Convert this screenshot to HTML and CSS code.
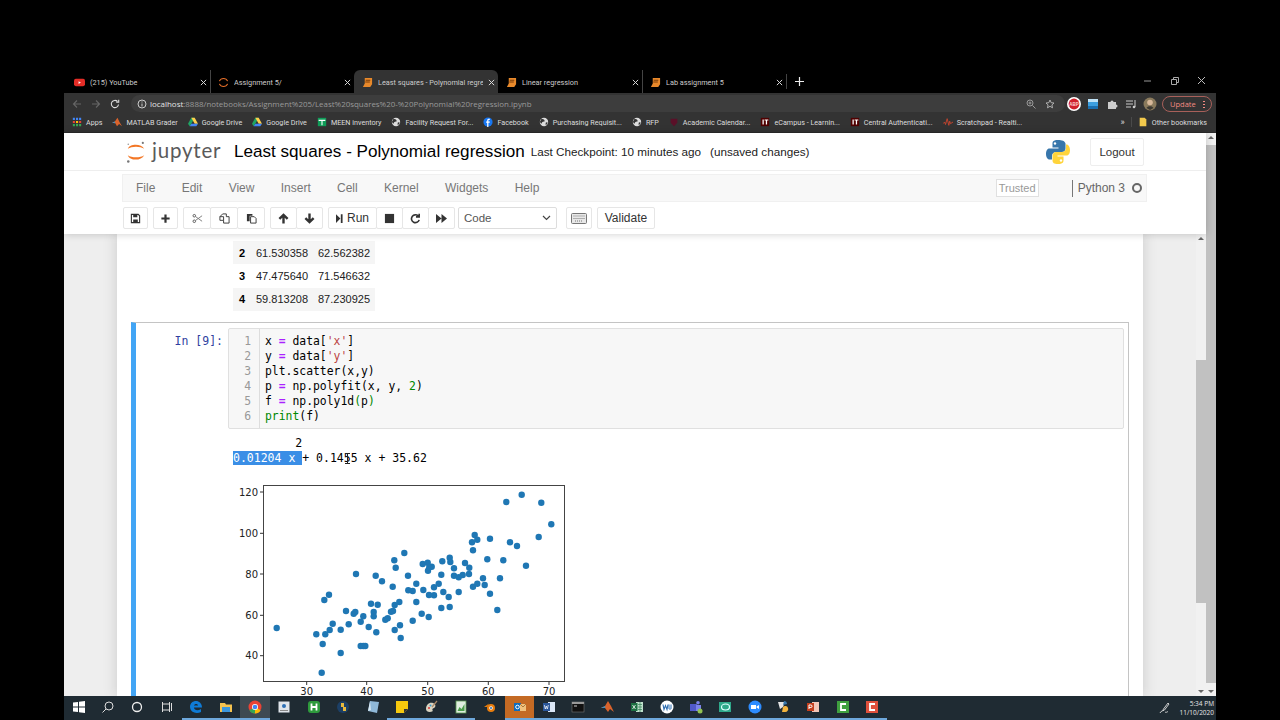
FILE: index.html
```html
<!DOCTYPE html>
<html lang="en">
<head>
    <meta charset="UTF-8">
    <title>Least squares - Polynomial regression</title>
    <link rel="stylesheet" href="styles.css">
</head>
<body>
<svg class="defs" width="0" height="0">
    <symbol id="book" viewBox="0 0 12 12"><path d="M3 1h8v7l-2 3H1l2-4z" fill="#e8892b"/><path d="M4 3h5v1H4zM3.500 5h5v1h-5z" fill="#7a3d08"/></symbol>
    <symbol id="globe" viewBox="0 0 12 12"><circle cx="6" cy="6" r="5" fill="#dcdcdc"/><path d="M3 2l3 1 1 2-3 1-1 2-2-2zM8 7l2-1 0 2-2 2z" fill="#333"/></symbol>
    <symbol id="drive" viewBox="0 0 12 12"><path d="M4 1h4l-4 7-2 3-2-3z" fill="#1fa463"/><path d="M4 1h4l4 7H8z" fill="#ffd04b"/><path d="M2 11l2-3h8l-2 3z" fill="#4285f4"/></symbol>
    <symbol id="it" viewBox="0 0 12 12"><rect x="1" y="1" width="10" height="10" fill="#500000"/><path d="M3 3h1.500v6H3zM5.500 3H10v1.300H8.500V9H7V4.300H5.500z" fill="#fff"/></symbol>
    <symbol id="close" viewBox="0 0 8 8"><path d="M1 1l6 6M7 1L1 7" stroke="#ddd" stroke-width="1.100"/></symbol>
</svg>

<div class="window">
    <!-- Chrome tabs -->
    <div class="tabbar">
        <div class="tab">
            <svg class="tab-icon" viewBox="0 0 12 12"><rect x="0" y="2" width="12" height="8" rx="2" fill="#e52d27"/><path d="M5 4.500v3l2.500-1.500z" fill="#fff"/></svg>
            <span class="tab-title">(215) YouTube</span>
            <svg class="tab-close"><use href="#close"/></svg>
        </div>
        <div class="tab tab-sep">
            <svg class="tab-icon" viewBox="0 0 12 12"><path d="M1.500 4.500a5 5 0 0 1 9 0M1.500 7.500a5 5 0 0 0 9 0" fill="none" stroke="#e8702a" stroke-width="1.200"/></svg>
            <span class="tab-title">Assignment 5/</span>
            <svg class="tab-close"><use href="#close"/></svg>
        </div>
        <div class="tab tab-active">
            <svg class="tab-icon"><use href="#book"/></svg>
            <span class="tab-title">Least squares - Polynomial regre</span>
            <svg class="tab-close"><use href="#close"/></svg>
        </div>
        <div class="tab">
            <svg class="tab-icon"><use href="#book"/></svg>
            <span class="tab-title">Linear regression</span>
            <svg class="tab-close"><use href="#close"/></svg>
        </div>
        <div class="tab tab-sep">
            <svg class="tab-icon"><use href="#book"/></svg>
            <span class="tab-title">Lab assignment 5</span>
            <svg class="tab-close"><use href="#close"/></svg>
        </div>
        <div class="new-tab">
            <svg width="9" height="9" viewBox="0 0 9 9"><path d="M4.500 0v9M0 4.500h9" stroke="#eee" stroke-width="1.200"/></svg>
        </div>
        <div class="win-controls">
            <svg width="10" height="10" viewBox="0 0 10 10"><path d="M1 5h7" stroke="#999"/></svg>
            <svg width="10" height="10" viewBox="0 0 10 10"><path d="M1.500 3.500h5v5h-5zM3.500 3.500v-2h5v5h-2" fill="none" stroke="#aaa"/></svg>
            <svg width="10" height="10" viewBox="0 0 10 10"><path d="M1 1l7 7M8 1L1 8" stroke="#bbb"/></svg>
        </div>
    </div>

    <!-- Address bar -->
    <div class="toolbar">
        <svg class="nav-icon" viewBox="0 0 10 10"><path d="M9 5H1.500M5 1.500L1.500 5 5 8.500" fill="none" stroke="#666" stroke-width="1.100"/></svg>
        <svg class="nav-icon" viewBox="0 0 10 10"><path d="M1 5h7.500M5 1.500L8.500 5 5 8.500" fill="none" stroke="#666" stroke-width="1.100"/></svg>
        <svg class="nav-icon" viewBox="0 0 10 10"><path d="M8.500 5.500a3.600 3.600 0 1 1-1-3M8.700 0.800v2.500H6.200" fill="none" stroke="#ddd" stroke-width="1.100"/></svg>
        <div class="omnibox">
            <svg class="omni-info" viewBox="0 0 10 10"><circle cx="5" cy="5" r="4" fill="none" stroke="#ccc"/><path d="M5 4.500V7.500M5 2.500v1" stroke="#ccc"/></svg>
            <span class="url"><b>localhost</b>:8888/notebooks/Assignment%205/Least%20squares%20-%20Polynomial%20regression.ipynb</span>
            <svg class="omni-end" viewBox="0 0 10 10"><circle cx="4" cy="4" r="3" fill="none" stroke="#999"/><path d="M6.500 6.500L9.500 9.500M2.500 4h3M4 2.500v3" stroke="#999"/></svg>
            <svg class="omni-end" viewBox="0 0 10 10"><path d="M5 1l1.200 2.700 2.800.3-2.100 1.900.6 2.900L5 7.300 2.500 8.800l.6-2.900L1 4l2.800-.3z" fill="none" stroke="#bbb" stroke-width=".9"/></svg>
        </div>
        <div class="ext-icons">
            <svg class="ext" viewBox="0 0 14 14"><circle cx="7" cy="7" r="7" fill="#fff"/><circle cx="7" cy="7" r="5.400" fill="#d0202a"/><text class="abp" x="7" y="8.600">ABP</text></svg>
            <svg class="ext" viewBox="0 0 14 14"><rect x="2" y="2" width="10" height="10" fill="#3b9fe0"/><rect x="2" y="2" width="10" height="3" fill="#bfe3f7"/><rect x="2" y="9" width="10" height="3" fill="#1a6fb0"/></svg>
            <svg class="ext" viewBox="0 0 14 14"><path d="M3 5h2.500a1.500 1.500 0 0 1 3 0H11v2.500a1.500 1.500 0 0 1 0 3V12H3z" fill="#ccc"/></svg>
            <svg class="ext" viewBox="0 0 14 14"><path d="M2 4h7M2 7h7M2 10h5" stroke="#ccc" stroke-width="1.100"/><path d="M11 3v7" stroke="#ccc"/><circle cx="10" cy="10" r="1.300" fill="#ccc"/></svg>
            <svg class="ext" viewBox="0 0 14 14"><circle cx="7" cy="7" r="6.500" fill="#8a7a5c"/><circle cx="7" cy="5.500" r="2.800" fill="#d8b99a"/><path d="M3.500 11c1-2.500 6-2.500 7 0l-3.500 2z" fill="#3d3a33"/></svg>
            <div class="update-btn">Update<span class="update-dots"></span></div>
        </div>
    </div>

    <!-- Bookmarks bar -->
    <div class="bookmarks">
        <div class="bm bm-apps">
            <svg class="bm-icon" viewBox="0 0 12 12"><path d="M1 1h2.500v2.500H1zM4.800 1h2.500v2.500H4.800zM8.500 1H11v2.500H8.500z" fill="#4285f4"/><path d="M1 4.800h2.500v2.500H1zM8.500 4.800H11v2.500H8.500z" fill="#ea4335"/><path d="M4.800 4.800h2.500v2.500H4.800z" fill="#fbbc05"/><path d="M1 8.500h2.500V11H1zM4.800 8.500h2.500V11H4.800zM8.500 8.500H11V11H8.500z" fill="#34a853"/></svg>Apps
        </div>
        <div class="bm">
            <svg class="bm-icon" viewBox="0 0 12 12"><path d="M0 7l3.500-1.500L6.500 1 9 6l3 5-3.500-2.500L6 11 4 7.500z" fill="#d9622b"/><path d="M0 7l3.500-1.500L4 7.500z" fill="#3f8fc0"/></svg>MATLAB Grader
        </div>
        <div class="bm"><svg class="bm-icon"><use href="#drive"/></svg>Google Drive</div>
        <div class="bm"><svg class="bm-icon"><use href="#drive"/></svg>Google Drive</div>
        <div class="bm">
            <svg class="bm-icon" viewBox="0 0 12 12"><rect x="1" y="1" width="10" height="10" fill="#0f9d58"/><path d="M2 4h8M6 4v6" stroke="#fff" stroke-width="1.300"/></svg>MEEN inventory
        </div>
        <div class="bm"><svg class="bm-icon"><use href="#globe"/></svg>Facility Request For...</div>
        <div class="bm">
            <svg class="bm-icon" viewBox="0 0 12 12"><circle cx="6" cy="6" r="5.500" fill="#1877f2"/><path d="M6.500 12V7H8l.3-1.700H6.500V4.300c0-.6.300-.9.900-.9h1V2h-1.300C5.800 2 5 2.800 5 4.100v1.200H3.700V7H5v5z" fill="#fff"/></svg>Facebook
        </div>
        <div class="bm"><svg class="bm-icon"><use href="#globe"/></svg>Purchasing Requisit...</div>
        <div class="bm"><svg class="bm-icon"><use href="#globe"/></svg>RFP</div>
        <div class="bm">
            <svg class="bm-icon" viewBox="0 0 12 12"><path d="M2 2h8v5l-4 4-4-4z" fill="#5a1028"/></svg>Academic Calendar...
        </div>
        <div class="bm"><svg class="bm-icon"><use href="#it"/></svg>eCampus - Learnin...</div>
        <div class="bm"><svg class="bm-icon"><use href="#it"/></svg>Central Authenticati...</div>
        <div class="bm">
            <svg class="bm-icon" viewBox="0 0 12 12"><path d="M0 8l2-2 1 3 2-7 2 8 1-5 1 3 3-2" fill="none" stroke="#c8452f" stroke-width="1.100"/></svg>Scratchpad - Realti...
        </div>
        <div class="bm-more">&raquo;</div>
        <div class="bm bm-other">
            <svg class="bm-icon" viewBox="0 0 12 12"><path d="M2 1h6l2 2v8H2z" fill="#f2c94c"/></svg>Other bookmarks
        </div>
    </div>

    <!-- Browser page -->
    <div class="page">
        <div class="page-main">
            <div class="nb-header">
                <div class="nb-title-row">
                    <svg class="jp-logo" viewBox="0 0 22 26">
                        <path d="M2 9.500C4 3.500 17 3.500 20 9.500 16 6.500 6 6.500 2 9.500z" fill="#f37726"/>
                        <path d="M2 16.500C4 23 17 23 20 16.500 16 19.500 6 19.500 2 16.500z" fill="#f37726"/>
                        <circle cx="18.500" cy="3" r="1.200" fill="#767677"/>
                        <circle cx="2.500" cy="23.500" r="1.400" fill="#767677"/>
                        <circle cx="2.500" cy="4.500" r=".9" fill="#989798"/>
                    </svg>
                    <span class="jp-word">jupyter</span>
                    <span class="nb-name">Least squares - Polynomial regression</span>
                    <span class="nb-check">Last Checkpoint: 10 minutes ago</span>
                    <span class="nb-unsaved">(unsaved changes)</span>
                    <svg class="py-logo" viewBox="0 0 26 26">
                        <path d="M13 1C7 1 7.500 3.500 7.500 6v2.500H13.500v1H4.500C2 9.500 1 12 1 15s1.500 5.500 3.500 5.500h2.500v-3.500c0-2.500 2-4 4.500-4h5.500c2 0 3.500-1.500 3.500-3.500V4.500C20 2 17 1 13 1z" fill="#3776ab"/>
                        <path d="M13 25c6 0 5.500-2.500 5.500-5v-2.500H12.500v-1h9c2.500 0 3.500-2.500 3.500-5.500s-1.500-5.500-3.500-5.500H21v3.500c0 2.500-2 4-4.500 4H11c-2 0-3.500 1.500-3.500 3.500v4.500C7.500 24 9 25 13 25z" fill="#ffd43b"/>
                        <circle cx="10" cy="4.500" r="1.200" fill="#fff"/>
                        <circle cx="16" cy="21.500" r="1.200" fill="#fff"/>
                    </svg>
                    <div class="logout">Logout</div>
                </div>
                <div class="menubar">
                    <span class="menu-item">File</span>
                    <span class="menu-item">Edit</span>
                    <span class="menu-item">View</span>
                    <span class="menu-item">Insert</span>
                    <span class="menu-item">Cell</span>
                    <span class="menu-item">Kernel</span>
                    <span class="menu-item">Widgets</span>
                    <span class="menu-item">Help</span>
                    <span class="trusted">Trusted</span>
                    <span class="kernel-name">Python 3</span>
                    <span class="kernel-dot"></span>
                </div>
                <div class="nb-toolbar">
                    <div class="btn-group">
                        <div class="tb-btn"><svg class="tb-icon" viewBox="0 0 12 12"><path d="M1.500 1.500h7.500l1.500 1.500v7.500h-9z" fill="none" stroke="#333" stroke-width="1.200"/><path d="M3.500 1.500h4.500v3H3.500zM3.500 7h5v3.500h-5z" fill="#333"/></svg></div>
                    </div>
                    <div class="btn-group">
                        <div class="tb-btn"><svg class="tb-icon" viewBox="0 0 12 12"><path d="M6 1.500v9M1.500 6h9" stroke="#333" stroke-width="2.400"/></svg></div>
                    </div>
                    <div class="btn-group">
                        <div class="tb-btn"><svg class="tb-icon" viewBox="0 0 12 12"><circle cx="2.500" cy="3" r="1.400" fill="none" stroke="#555"/><circle cx="2.500" cy="9" r="1.400" fill="none" stroke="#555"/><path d="M3.700 3.800L11 9M3.700 8.200L11 3" stroke="#777"/></svg></div>
                        <div class="tb-btn"><svg class="tb-icon" viewBox="0 0 12 12"><path d="M4 1h4v3h3v7H5V8H1V4zM5 8V4H1" fill="none" stroke="#333"/></svg></div>
                        <div class="tb-btn"><svg class="tb-icon" viewBox="0 0 12 12"><path d="M1 1h6v2H4v6H1z" fill="#333"/><path d="M5 4h4l2 2v5H5z" fill="none" stroke="#333"/></svg></div>
                    </div>
                    <div class="btn-group">
                        <div class="tb-btn"><svg class="tb-icon" viewBox="0 0 12 12"><path d="M6 11.500V2.500M1.500 6.500L6 2l4.500 4.500" fill="none" stroke="#333" stroke-width="2.600"/></svg></div>
                        <div class="tb-btn"><svg class="tb-icon" viewBox="0 0 12 12"><path d="M6 .5v9M1.500 5.500L6 10l4.500-4.500" fill="none" stroke="#333" stroke-width="2.600"/></svg></div>
                    </div>
                    <div class="btn-group">
                        <div class="tb-btn tb-run"><svg class="tb-icon-sm" viewBox="0 0 8 10"><path d="M0 0l5 5-5 5zM5.500 0H7.500V10H5.500z" fill="#333"/></svg>Run</div>
                        <div class="tb-btn"><svg class="tb-icon" viewBox="0 0 12 12"><rect x="1" y="1" width="10" height="10" fill="#333"/></svg></div>
                        <div class="tb-btn"><svg class="tb-icon" viewBox="0 0 12 12"><path d="M10 7.500a4.300 4.300 0 1 1-1-4.200M10 .800v3.500H6.500" fill="none" stroke="#333" stroke-width="1.800"/></svg></div>
                        <div class="tb-btn"><svg class="tb-icon" viewBox="0 0 12 12"><path d="M0 1l6 5-6 5zM6 1l6 5-6 5z" fill="#333"/></svg></div>
                    </div>
                    <div class="cell-type">Code<svg width="9" height="6" viewBox="0 0 9 6"><path d="M1 1l3.500 3.500L8 1" fill="none" stroke="#444" stroke-width="1.200"/></svg></div>
                    <div class="tb-btn tb-keys"><svg width="16" height="11" viewBox="0 0 16 11"><rect x=".5" y=".5" width="15" height="10" rx="1" fill="#e8e8e8" stroke="#777"/><path d="M2.500 3h11M2.500 5.500h11M4 8h8" stroke="#777" stroke-dasharray="1 1"/></svg></div>
                    <div class="tb-btn tb-validate">Validate</div>
                </div>
            </div>

            <div class="nb-body">
                <div class="site">
                    <div class="nb-container">
                        <table class="frame">
                            <tr><th>2</th><td>61.530358</td><td>62.562382</td></tr>
                            <tr><th>3</th><td>47.475640</td><td>71.546632</td></tr>
                            <tr><th>4</th><td>59.813208</td><td>87.230925</td></tr>
                        </table>

                        <div class="cell">
                            <div class="input-row">
                                <div class="prompt">In&nbsp;[9]:</div>
                                <div class="input-area">
                                    <div class="gutter">1<br>2<br>3<br>4<br>5<br>6</div>
                                    <pre class="code">x <span class="op">=</span> data[<span class="str">'x'</span>]
y <span class="op">=</span> data[<span class="str">'y'</span>]
plt.scatter(x,y)
p <span class="op">=</span> np.polyfit(x, y, <span class="num">2</span>)
f <span class="op">=</span> np.poly1d<span class="num">(</span>p<span class="num">)</span>
<span class="num">print</span>(f)</pre>
                                </div>
                            </div>
                            <div class="output">
                                <pre class="stdout">         2
<span class="selected">0.01204 x </span>+ 0.1455 x + 35.62</pre>
                                <svg class="ibeam" width="7" height="11" viewBox="0 0 7 11"><path d="M1 .5h5M3.500.5v10M1 10.500h5" fill="none" stroke="#222"/></svg>
                                <svg class="plot" width="340" height="216" viewBox="0 0 340 216">
                                    <rect x="30.500" y="5.500" width="301" height="196" fill="#fff" stroke="#444"/>
                                    <path class="ticks" d="M27 12h3.500M27 53.300h3.500M27 94h3.500M27 135.300h3.500M27 175.700h3.500M73.700 201.500v3.500M133.700 201.500v3.500M194.700 201.500v3.500M255.300 201.500v3.500M316 201.500v3.500"/>
                                    <g class="tick-y">
                                        <text x="25" y="15.500">120</text>
                                        <text x="25" y="56.800">100</text>
                                        <text x="25" y="97.500">80</text>
                                        <text x="25" y="138.800">60</text>
                                        <text x="25" y="179.200">40</text>
                                    </g>
                                    <g class="tick-x">
                                        <text x="73.700" y="215">30</text>
                                        <text x="133.700" y="215">40</text>
                                        <text x="194.700" y="215">50</text>
                                        <text x="255.300" y="215">60</text>
                                        <text x="316" y="215">70</text>
                                    </g>
                                    <g class="dots">
                                        <circle cx="43.700" cy="148"/><circle cx="83.300" cy="154.300"/><circle cx="92.300" cy="154.300"/><circle cx="89.700" cy="164"/><circle cx="96.700" cy="150"/><circle cx="99.700" cy="143.700"/><circle cx="107.700" cy="149.700"/><circle cx="107.700" cy="173"/><circle cx="88.700" cy="192.700"/><circle cx="91.300" cy="120"/><circle cx="96" cy="114.700"/><circle cx="123" cy="94"/><circle cx="113" cy="131"/><circle cx="115.700" cy="144.300"/><circle cx="120.700" cy="133.700"/><circle cx="122.300" cy="132"/><circle cx="127.700" cy="141.700"/><circle cx="130.300" cy="136.300"/><circle cx="127.700" cy="166"/><circle cx="130.300" cy="166"/><circle cx="132.300" cy="166"/><circle cx="135.700" cy="147"/><circle cx="143.300" cy="152.300"/><circle cx="138" cy="123.700"/><circle cx="144.700" cy="124.700"/><circle cx="140.700" cy="132"/><circle cx="140.700" cy="136.300"/><circle cx="142.700" cy="95.700"/><circle cx="149" cy="101.300"/><circle cx="159.700" cy="106.700"/><circle cx="152.300" cy="139.700"/><circle cx="154.700" cy="138.300"/><circle cx="158" cy="131.700"/><circle cx="160" cy="131"/><circle cx="161.700" cy="125"/><circle cx="166.300" cy="122"/><circle cx="161.300" cy="80.300"/><circle cx="162.700" cy="87.700"/><circle cx="161.700" cy="150"/><circle cx="167" cy="145.300"/><circle cx="167.700" cy="158"/>
                                        <circle cx="171.300" cy="73"/><circle cx="175" cy="95.700"/><circle cx="175.300" cy="110.300"/><circle cx="179.700" cy="111"/><circle cx="183.300" cy="103.700"/><circle cx="183.300" cy="122"/><circle cx="179.700" cy="140.700"/><circle cx="188.700" cy="133.700"/><circle cx="195.700" cy="137"/><circle cx="190.300" cy="110"/><circle cx="196" cy="115"/><circle cx="201" cy="115.300"/><circle cx="201" cy="107.300"/><circle cx="205.700" cy="103.700"/><circle cx="210.300" cy="112"/><circle cx="215.700" cy="117"/><circle cx="208.300" cy="128"/><circle cx="216.700" cy="127"/><circle cx="225.700" cy="112"/><circle cx="240" cy="106.700"/><circle cx="244.300" cy="103.700"/><circle cx="251.700" cy="105"/><circle cx="250" cy="98.300"/><circle cx="257" cy="113.700"/><circle cx="264.300" cy="130"/><circle cx="267" cy="98.300"/><circle cx="189.700" cy="84"/><circle cx="194.700" cy="82.700"/><circle cx="198.700" cy="86.700"/><circle cx="195" cy="90.700"/><circle cx="196.300" cy="87.300"/><circle cx="208.300" cy="94.700"/><circle cx="209.300" cy="81.300"/><circle cx="216.700" cy="77.700"/><circle cx="217.300" cy="82"/><circle cx="221" cy="88.300"/><circle cx="221" cy="95.700"/><circle cx="225.700" cy="97.300"/><circle cx="229.700" cy="95"/><circle cx="232" cy="83"/><circle cx="236.300" cy="87.700"/><circle cx="236" cy="94"/><circle cx="240" cy="70.300"/><circle cx="239" cy="62.300"/><circle cx="241.700" cy="55"/><circle cx="244.300" cy="59.700"/><circle cx="254.300" cy="79.300"/><circle cx="257" cy="58.700"/><circle cx="270.300" cy="80.300"/><circle cx="277" cy="62.300"/><circle cx="284" cy="66"/><circle cx="293" cy="85.700"/><circle cx="305.700" cy="57"/><circle cx="273.300" cy="22"/><circle cx="288.700" cy="14.700"/><circle cx="308.300" cy="22.700"/><circle cx="318.300" cy="44.300"/>
                                    </g>
                                </svg>
                            </div>
                        </div>
                    </div>
                </div>
                <div class="scrollbar scrollbar-inner"><span class="arrow-up"></span><div class="thumb-inner"></div><span class="arrow-down"></span></div>
            </div>
        </div>
        <div class="scrollbar scrollbar-outer"><span class="arrow-up"></span><div class="thumb-outer"></div><span class="arrow-down"></span></div>
    </div>

    <!-- Windows taskbar -->
    <div class="taskbar">
        <div class="task"><svg viewBox="0 0 14 14"><path d="M1 2.500L6 2v4.500H1zM7 1.800L13 1v5.500H7zM1 7.500h5V12L1 11.500zM7 7.500h6V13l-6-.8z" fill="#fff"/></svg></div>
        <div class="task"><svg viewBox="0 0 14 14"><circle cx="8" cy="6" r="4" fill="none" stroke="#ddd"/><path d="M5 9l-3.500 3.500" stroke="#ddd"/></svg></div>
        <div class="task"><svg viewBox="0 0 14 14"><circle cx="7" cy="7" r="4.500" fill="none" stroke="#eee" stroke-width="1.300"/></svg></div>
        <div class="task"><svg viewBox="0 0 14 14"><path d="M2.500 2v10M9.500 2v10M2.500 4h7v6h-7zM11.500 3v8" fill="none" stroke="#ddd"/></svg></div>
        <div class="task open"><svg viewBox="0 0 14 14"><path d="M1 7c0-4 3-6 6-6s6 2.500 6 6.500H5c.2 3 4 3.500 7 1.500v3c-4 2-11 1-11-5.500zM5 5.500h4C9 3.500 5.500 3.500 5 5.500z" fill="#0f7bd6"/></svg></div>
        <div class="task open"><svg viewBox="0 0 14 14"><path d="M1 3h5l1 1.500h6V12H1z" fill="#f4c24f"/><rect x="3" y="7" width="8" height="5" fill="#3a96dd"/></svg></div>
        <div class="task open task-lit"><svg viewBox="0 0 14 14"><circle cx="7" cy="7" r="6.500" fill="#ea4335"/><path d="M7 7L1.400 10.200A6.500 6.500 0 0 0 7 13.500z" fill="#34a853"/><path d="M7 7l5.600 3.200A6.500 6.500 0 0 1 7 13.500z" fill="#fbbc05"/><circle cx="7" cy="7" r="3" fill="#fff"/><circle cx="7" cy="7" r="2.300" fill="#4285f4"/></svg></div>
        <div class="task"><svg viewBox="0 0 14 14"><rect x="1.500" y="1.500" width="11" height="11" fill="#dfe4ea"/><circle cx="7" cy="6" r="2" fill="#2d6fb5"/><rect x="3" y="10" width="8" height="1" fill="#888"/></svg></div>
        <div class="task"><svg viewBox="0 0 14 14"><rect x="1" y="1" width="12" height="12" rx="3" fill="#2e9a3c"/><path d="M4.500 3.500v7M9.500 3.500v7M4.500 7h5" stroke="#fff" stroke-width="1.800"/></svg></div>
        <div class="task"><svg viewBox="0 0 14 14"><circle cx="7" cy="7" r="6" fill="#1c3f66"/><path d="M5 3h3v4H5zM7 7h3v4H7z" fill="#e8b93c"/></svg></div>
        <div class="task"><svg viewBox="0 0 14 14"><path d="M4 1l9 1-2 11-9-2z" fill="#8fb8d8"/><path d="M4 1L2 11l3-1z" fill="#d5e6f2"/></svg></div>
        <div class="task open"><svg viewBox="0 0 14 14"><path d="M1 1h12v8l-4 4H1z" fill="#f6c90e"/><path d="M13 9H9v4z" fill="#333"/></svg></div>
        <div class="task open"><svg viewBox="0 0 14 14"><path d="M2 9c0-4 3-7 7-6 3 1 3 4 1 5-2 .5-2 2-1 3-3 2-7 1-7-2z" fill="#d8d3c0"/><circle cx="5" cy="8" r="1" fill="#d33"/><circle cx="6.500" cy="5.500" r="1" fill="#39c"/><path d="M13 1L8 7" stroke="#a86" stroke-width="1.200"/></svg></div>
        <div class="task open"><svg viewBox="0 0 14 14"><rect x="2" y="1" width="10" height="12" fill="#dfeee0" stroke="#5a9a50" stroke-width=".8"/><path d="M3.500 11l2-4 2 2 3-5v7z" fill="#4a9e4a"/></svg></div>
        <div class="task"><svg viewBox="0 0 14 14"><circle cx="8" cy="8" r="4" fill="#e87d0d"/><circle cx="8" cy="8" r="1.800" fill="#fff"/><circle cx="8" cy="8" r="1" fill="#2d6fb5"/><path d="M1 7l5-3.500L4 7z" fill="#e87d0d"/></svg></div>
        <div class="task open task-orange"><svg viewBox="0 0 14 14"><rect x="1" y="3" width="7" height="8" fill="#0f6cbd"/><circle cx="4.500" cy="7" r="1.800" fill="none" stroke="#fff"/><rect x="7" y="4" width="6" height="7" fill="#f1c27d"/><path d="M7 4l3 3 3-3" fill="none" stroke="#8a5a20" stroke-width=".7"/></svg></div>
        <div class="task open"><svg viewBox="0 0 14 14"><rect x="6" y="2" width="7" height="10" fill="#dbe7f6"/><rect x="1" y="3" width="7" height="8" fill="#2b579a"/><path d="M2.300 5l1 4 1-3 1 3 1-4" fill="none" stroke="#fff" stroke-width=".7"/></svg></div>
        <div class="task open"><svg viewBox="0 0 14 14"><rect x="1" y="2" width="12" height="10" fill="#111" stroke="#777" stroke-width=".6"/><rect x="1" y="2" width="12" height="2" fill="#999"/><path d="M3 6h3" stroke="#ccc"/></svg></div>
        <div class="task open"><svg viewBox="0 0 14 14"><path d="M0 8l4-2L7 1l3 5 3 6-4-3-2 3-3-4z" fill="#d9622b"/><path d="M0 8l4-2 .5 2z" fill="#3f8fc0"/></svg></div>
        <div class="task open"><svg viewBox="0 0 14 14"><rect x="6" y="2" width="7" height="10" fill="#bfe0cc"/><path d="M8 4.500h4M8 7h4M8 9.500h4M10 2v10" stroke="#1d6f42" stroke-width=".6"/><rect x="1" y="3" width="6.500" height="8" fill="#1d6f42"/><path d="M2.500 5l3 4M5.500 5l-3 4" stroke="#fff" stroke-width=".8"/></svg></div>
        <div class="task open"><svg viewBox="0 0 14 14"><circle cx="7" cy="7" r="6.500" fill="#fff"/><path d="M3 4.500l1 5 1.500-4 1.500 4 1-5" fill="none" stroke="#2b6cb0" stroke-width="1.100"/><path d="M9 4.500v4c0 1 2 1 2 0v-4" fill="none" stroke="#2b6cb0"/></svg></div>
        <div class="task open"><svg viewBox="0 0 14 14"><rect x="1" y="4" width="7" height="7" fill="#5059c9"/><rect x="7" y="5" width="5" height="6" fill="#7b83eb"/><circle cx="9" cy="2.800" r="1.800" fill="#7b83eb"/><circle cx="11" cy="11" r="2.500" fill="#92c353"/></svg></div>
        <div class="task open"><svg viewBox="0 0 14 14"><rect x="1" y="2" width="12" height="10" fill="#2ea88a"/><ellipse cx="7.500" cy="7" rx="4" ry="3" fill="none" stroke="#dff" stroke-width="1.200"/></svg></div>
        <div class="task open"><svg viewBox="0 0 14 14"><circle cx="7" cy="7" r="6.500" fill="#2d8cff"/><path d="M3 5h5v4H3zM8.500 6.500L11 5v4L8.500 7.500z" fill="#fff"/></svg></div>
        <div class="task open"><svg viewBox="0 0 14 14"><path d="M1 2h7l-2 5-3 2z" fill="#e4e4e4"/><path d="M6 7a3 3 0 1 1 2 5H5z" fill="#f3b33d"/><path d="M7 1c2 0 3 1 3 3L6 5z" fill="#3776ab"/></svg></div>
        <div class="task open"><svg viewBox="0 0 14 14"><rect x="6" y="2" width="7" height="10" fill="#f4c7b8"/><rect x="1" y="3" width="7" height="8" fill="#c43e1c"/><path d="M3 9V5h1.800a1.200 1.200 0 0 1 0 2.500H3" fill="none" stroke="#fff"/></svg></div>
        <div class="task open"><svg viewBox="0 0 14 14"><rect x="1" y="1" width="12" height="12" fill="#3fa03f"/><path d="M10 4H5v6h5" fill="none" stroke="#fff" stroke-width="1.800"/></svg></div>
        <div class="task open"><svg viewBox="0 0 14 14"><rect x="1" y="1" width="12" height="12" fill="#e0503c"/><path d="M10 4H5v6h5" fill="none" stroke="#fff" stroke-width="1.800"/></svg></div>
        <div class="tray">
            <svg width="12" height="12" viewBox="0 0 12 12"><path d="M9 1L4.500 7 3.500 9l2-1L10 2zM3 9c-1 .3-1.500 1-2 2M6 10c1 .8 2 0 3-.5" fill="none" stroke="#ddd" stroke-width=".9"/></svg>
            <div class="clock"><span>5:34 PM</span><span>11/10/2020</span></div>
        </div>
    </div>
</div>
</body>
</html>
```

FILE: styles.css
```css
* {
    box-sizing: border-box;
}

html, body {
    margin: 0;
    height: 720px;
    overflow: hidden;
    background: #000;
    font-family: "Liberation Sans", Arial, sans-serif;
}

.defs {
    display: block;
    height: 0;
}

.window {
    width: 1152px;
    height: 720px;
    margin-left: 64px;
    padding-top: 70px;
    display: flex;
    flex-direction: column;
}

/* tabs */
.tabbar {
    height: 23px;
    display: flex;
    align-items: stretch;
    padding-left: 2px;
    background: #000;
    flex: none;
}

.tab {
    width: 144px;
    padding: 1px 3px 0 8px;
    display: flex;
    align-items: center;
    gap: 5px;
    color: #ccc;
    font: 7.300px Roboto, sans-serif;
    white-space: nowrap;
}

.tab-sep {
    border-left: 1px solid #444;
    padding-left: 7px;
}

.tab-active {
    background: #333;
    border-radius: 6px 6px 0 0;
}

.tab-icon {
    width: 11px;
    height: 11px;
    flex: none;
}

.tab-title {
    flex: 1;
    overflow: hidden;
}

.tab-close {
    width: 7px;
    height: 7px;
    flex: none;
}

.new-tab {
    width: 26px;
    border-left: 1px solid #444;
    margin: 4px 0;
    display: flex;
    align-items: center;
    justify-content: center;
}

.win-controls {
    margin-left: auto;
    margin-top: -2px;
    padding-right: 9px;
    display: flex;
    align-items: center;
    gap: 17px;
}

/* address bar */
.toolbar {
    height: 21px;
    background: #333;
    display: flex;
    align-items: center;
    padding-left: 8px;
    flex: none;
}

.nav-icon {
    width: 10px;
    height: 10px;
    margin-right: 9px;
}

.omnibox {
    width: 934px;
    height: 17px;
    margin-left: 2px;
    border-radius: 9px;
    background: #3d3d3d;
    display: flex;
    align-items: center;
    padding: 0 10px 0 6px;
}

.omni-info {
    width: 10px;
    height: 10px;
    margin-right: 3px;
}

.url {
    flex: 1;
    font: 7.950px "Open Sans", sans-serif;
    color: #999;
}

.url b {
    color: #e4e4e4;
    font-weight: 400;
}

.omni-end {
    width: 10px;
    height: 10px;
    margin-left: 9px;
}

.ext-icons {
    display: flex;
    align-items: center;
    gap: 5px;
    padding-left: 2px;
}

.ext {
    width: 14px;
    height: 14px;
}

.abp {
    font: 700 4.500px "Liberation Sans", sans-serif;
    fill: #f8d0d0;
    text-anchor: middle;
}

.update-btn {
    width: 50px;
    height: 16px;
    border: 1px solid #a8605a;
    border-radius: 8px;
    color: #f28b82;
    font: 7.5px/14px "Open Sans", sans-serif;
    padding-left: 7px;
    position: relative;
}

.update-dots {
    position: absolute;
    right: 6px;
    top: 3px;
    width: 2px;
    height: 8px;
    background: radial-gradient(circle, #f28b82 1px, transparent 1px) 0 0 / 2px 3px;
}

/* bookmarks */
.bookmarks {
    height: 19px;
    background: #333;
    display: flex;
    align-items: center;
    padding: 0 0 2px 8px;
    gap: 10px;
    color: #ddd;
    font: 7.200px Roboto, sans-serif;
    white-space: nowrap;
    border-bottom: 1px solid #2a2a2a;
    flex: none;
}

.bm {
    display: flex;
    align-items: center;
    gap: 4px;
}

.bm-icon {
    width: 10px;
    height: 10px;
    flex: none;
}

.bm-more {
    margin-left: auto;
    font-size: 9px;
    margin-right: -4px;
}

.bm-other {
    padding-left: 6px;
    padding-right: 9px;
    border-left: 1px solid #4a4a4a;
}

/* page */
.page {
    flex: 1;
    min-height: 0;
    display: flex;
    background: #fff;
}

.page-main {
    flex: 1;
    min-width: 0;
    display: flex;
    flex-direction: column;
}

.nb-header {
    height: 101px;
    background: #fff;
    box-shadow: 0 0 8px rgba(0, 0, 0, 0.2);
    position: relative;
    flex: none;
}

.nb-title-row {
    height: 38px;
    display: flex;
    align-items: center;
    padding-left: 62px;
    border-bottom: 1px solid #eee;
}

.jp-logo {
    width: 20px;
    height: 24px;
    flex: none;
}

.jp-word {
    margin: 0 0 3px 6px;
    width: 82px;
    font: 20.500px "Lato", sans-serif;
    letter-spacing: 0.8px;
    color: #5a5a5a;
}

.nb-name {
    font-size: 17.100px;
    color: #000;
}

.nb-check {
    margin-left: 6px;
    font-size: 11.700px;
    color: #222;
}

.nb-unsaved {
    margin-left: 9px;
    font-size: 11.700px;
    color: #222;
}

.py-logo {
    width: 26px;
    height: 26px;
    margin-left: auto;
    flex: none;
}

.logout {
    width: 54px;
    height: 28px;
    margin: 0 62px 0 19px;
    border: 1px solid #eee;
    border-radius: 2px;
    font-size: 11.5px;
    line-height: 26px;
    text-align: center;
    color: #333;
}

.menubar {
    height: 28px;
    width: 1025px;
    margin: 3px 0 0 58px;
    background: #f8f8f8;
    border: 1px solid #f0f0f0;
    display: flex;
    align-items: center;
    padding-left: 13px;
    color: #777;
    font-size: 12px;
}

.menu-item {
    margin-right: 26.300px;
}

.trusted {
    margin-left: auto;
    width: 43px;
    height: 18px;
    border: 1px solid #e0e0e0;
    background: #fff;
    color: #999;
    font-size: 11px;
    line-height: 16px;
    text-align: center;
}

.kernel-name {
    margin-left: 33px;
    padding-left: 5px;
    border-left: 1px solid #777;
    height: 17px;
    line-height: 17px;
    color: #666;
}

.kernel-dot {
    width: 10px;
    height: 10px;
    margin: 0 4px 0 7px;
    border: 2px solid #666;
    border-radius: 50%;
}

.nb-toolbar {
    margin: 5px 0 0 59px;
    display: flex;
    gap: 5px;
}

.btn-group {
    display: flex;
}

.tb-btn {
    height: 22px;
    min-width: 25px;
    padding: 0 6px;
    border: 1px solid #e6e6e6;
    background: #fff;
    display: flex;
    align-items: center;
    justify-content: center;
    font-size: 12px;
    color: #333;
    margin-left: -1px;
    border-radius: 2px;
}

.btn-group .tb-btn:first-child {
    margin-left: 0;
}

.btn-group:nth-child(3) .tb-btn {
    width: 28px;
}

.btn-group:nth-child(4) .tb-btn,
.btn-group:nth-child(5) .tb-btn {
    width: 27px;
}

.tb-icon {
    width: 11px;
    height: 11px;
    flex: none;
}

.tb-icon-sm {
    width: 7px;
    height: 9px;
    margin-right: 4px;
    flex: none;
}

.btn-group:nth-child(5) .tb-run {
    width: 49px;
}

.cell-type {
    width: 99px;
    height: 22px;
    margin-left: -2px;
    padding: 0 5px;
    border: 1px solid #ddd;
    border-radius: 2px;
    display: flex;
    align-items: center;
    justify-content: space-between;
    color: #555;
    font-size: 11.5px;
}

.tb-keys {
    margin-left: 4px;
    width: 26px;
    padding: 0;
}

.tb-validate {
    margin-left: 0;
    width: 58px;
}

/* notebook */
.nb-body {
    flex: 1;
    min-height: 0;
    display: flex;
}

.site {
    flex: 1;
    min-width: 0;
    background: #eee;
    overflow: hidden;
    padding-left: 53px;
}

.nb-container {
    width: 1026px;
    height: 100%;
    background: #fff;
    box-shadow: 0 0 12px 1px rgba(87, 87, 87, 0.2);
    padding-top: 7px;
}

.frame {
    margin-left: 116px;
    border-collapse: collapse;
    font-size: 11px;
    color: #000;
}

.frame tr {
    height: 23.300px;
}

.frame tr:nth-child(odd) {
    background: #f5f5f5;
}

.frame th {
    width: 18px;
    padding: 0;
    text-align: center;
    font-weight: 700;
}

.frame td {
    padding: 0 5px;
    width: 57px;
    color: #222;
}

.cell {
    width: 998px;
    height: 500px;
    margin: 11px 0 0 14px;
    padding: 5px 0 0 0;
    border: 1px solid #c4c4c4;
    border-left: 5px solid #42a5f5;
}

.input-row {
    display: flex;
}

.prompt {
    width: 87px;
    padding: 6px 0 0 0;
    text-align: right;
    font: 11.500px/15px "DejaVu Sans Mono", monospace;
    color: #303f9f;
    white-space: nowrap;
}

.input-area {
    width: 896px;
    height: 101px;
    margin-left: 5px;
    background: #f7f7f7;
    border: 1px solid #e0e0e0;
    border-radius: 2px;
    display: flex;
    padding-top: 5px;
}

.gutter {
    width: 31px;
    height: calc(100% + 5px);
    margin-top: -5px;
    padding: 5px 8px 0 0;
    border-right: 1px solid #ddd;
    text-align: right;
    color: #999;
    font: 11.400px/15px "DejaVu Sans Mono", monospace;
}

.code {
    margin: 0 0 0 5px;
    font: 11.400px/15px "DejaVu Sans Mono", monospace;
    color: #000;
}

.op {
    color: #a2f;
    font-weight: 700;
}

.str {
    color: #b44;
}

.num {
    color: #080;
}

.output {
    margin-left: 97px;
    padding-top: 7px;
    position: relative;
}

.stdout {
    margin: 0;
    font: 11.500px/15px "DejaVu Sans Mono", monospace;
    color: #000;
}

.selected {
    background: #3a8ee6;
    color: #fff;
}

.ibeam {
    position: absolute;
    left: 111px;
    top: 24px;
}

.plot {
    display: block;
    margin-top: 14px;
}

.ticks {
    stroke: #333;
    fill: none;
}

.tick-y text,
.tick-x text {
    font: 10px "DejaVu Sans", sans-serif;
    fill: #222;
}

.tick-y text {
    text-anchor: end;
}

.tick-x text {
    text-anchor: middle;
}

.dots circle {
    r: 3.200px;
    fill: #1f77b4;
}

/* scrollbars */
.scrollbar {
    width: 10px;
    background: #f1f1f1;
    display: flex;
    flex-direction: column;
    align-items: center;
    flex: none;
}

.arrow-up,
.arrow-down {
    width: 0;
    height: 0;
    margin: 3px 0;
    border-left: 3px solid transparent;
    border-right: 3px solid transparent;
    flex: none;
}

.arrow-up {
    border-bottom: 3px solid #666;
}

.arrow-down {
    margin-top: auto;
    border-top: 3px solid #666;
}

.thumb-outer,
.thumb-inner {
    width: 100%;
    background: #c1c1c1;
}

.thumb-outer {
    height: 538px;
    margin-top: 3px;
}

.thumb-inner {
    height: 243px;
    margin-top: 117px;
}

/* taskbar */
.taskbar {
    height: 24px;
    background: #1f2b33;
    display: flex;
    align-items: stretch;
    flex: none;
}

.task {
    width: 29.400px;
    display: flex;
    align-items: center;
    justify-content: center;
    border-bottom: 2px solid transparent;
}

.task svg {
    width: 14px;
    height: 14px;
}

.task.open {
    border-bottom-color: #6ea8dc;
}

.task-lit {
    background: #3e4a52;
}

.task-orange {
    background: #c46a24;
}

.tray {
    margin-left: auto;
    padding-right: 2px;
    display: flex;
    align-items: center;
    gap: 9px;
}

.clock {
    display: flex;
    flex-direction: column;
    align-items: flex-end;
    color: #e8e8e8;
    font: 6.500px/9px "Open Sans", sans-serif;
}
```
